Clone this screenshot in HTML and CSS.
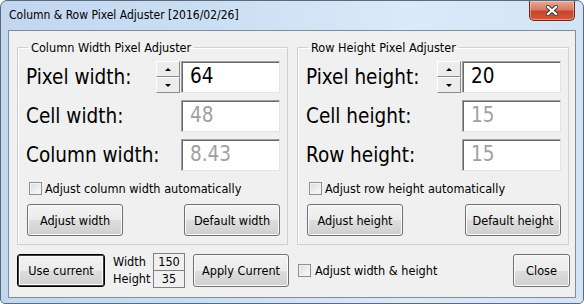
FILE: index.html
```html
<!DOCTYPE html>
<html lang="en">
<head>
    <meta charset="UTF-8">
    <title>Column &amp; Row Pixel Adjuster</title>
    <link rel="stylesheet" href="styles.css">
</head>
<body>

    <div class="window">
        <div class="titlebar">
            <span class="title">Column &amp; Row Pixel Adjuster [2016/02/26]</span>
            <button class="close-btn" title="Close">
                <svg width="12" height="11" viewBox="0 0 12 11">
                    <path d="M2 2 L10 9 M10 2 L2 9" stroke="#3a3a3a" stroke-width="4.2" stroke-linecap="square"/>
                    <path d="M2 2 L10 9 M10 2 L2 9" stroke="#fff" stroke-width="2.2" stroke-linecap="square"/>
                </svg>
            </button>
        </div>

        <div class="client">
            <div class="groups">
                <fieldset class="group">
                    <legend>Column Width Pixel Adjuster</legend>
                    <div class="field">
                        <span class="label">Pixel width:</span>
                        <div class="spin">
                            <span class="spin-btn"><i class="arrow-up"></i></span>
                            <span class="spin-btn"><i class="arrow-down"></i></span>
                        </div>
                        <div class="value">64</div>
                    </div>
                    <div class="field">
                        <span class="label">Cell width:</span>
                        <div class="value disabled">48</div>
                    </div>
                    <div class="field">
                        <span class="label">Column width:</span>
                        <div class="value disabled">8.43</div>
                    </div>
                    <label class="check"><span class="box"></span>Adjust column width automatically</label>
                    <div class="actions">
                        <button class="btn">Adjust width</button>
                        <button class="btn">Default width</button>
                    </div>
                </fieldset>

                <fieldset class="group wide">
                    <legend>Row Height Pixel Adjuster</legend>
                    <div class="field">
                        <span class="label">Pixel height:</span>
                        <div class="spin">
                            <span class="spin-btn"><i class="arrow-up"></i></span>
                            <span class="spin-btn"><i class="arrow-down"></i></span>
                        </div>
                        <div class="value">20</div>
                    </div>
                    <div class="field">
                        <span class="label">Cell height:</span>
                        <div class="value disabled">15</div>
                    </div>
                    <div class="field">
                        <span class="label">Row height:</span>
                        <div class="value disabled">15</div>
                    </div>
                    <label class="check"><span class="box"></span>Adjust row height automatically</label>
                    <div class="actions">
                        <button class="btn">Adjust height</button>
                        <button class="btn">Default height</button>
                    </div>
                </fieldset>
            </div>

            <div class="footer">
                <button class="btn btn-default">Use current</button>
                <div class="dims">
                    <div class="dim-labels">
                        <span>Width</span>
                        <span>Height</span>
                    </div>
                    <div class="dim-boxes">
                        <span>150</span>
                        <span>35</span>
                    </div>
                </div>
                <button class="btn btn-apply">Apply Current</button>
                <label class="check check-both"><span class="box"></span>Adjust width &amp; height</label>
                <button class="btn btn-close">Close</button>
            </div>
        </div>
    </div>

</body>
</html>
```

FILE: styles.css
```css
body {
    margin: 0;
    background-color: #ffffff;
    font-family: "DejaVu Sans Condensed", "DejaVu Sans", sans-serif;
    font-stretch: condensed;
    color: #000;
}

.window {
    box-sizing: border-box;
    width: 584px;
    height: 304px;
    border: 1px solid #5d6a7a;
    border-radius: 7px 7px 5px 5px;
    background: linear-gradient(to right, #c2d7ef 0%, #cadef3 35%, #dbe9f8 70%, #d3e4f6 100%);
    padding: 0 7px 5px;
    display: flex;
    flex-direction: column;
}

.titlebar {
    height: 29px;
    display: flex;
    align-items: flex-start;
}

.title {
    margin: 6px 0 0 1px;
    font-size: 12px;
    line-height: 16px;
}

.close-btn {
    margin-left: auto;
    margin-right: 1px;
    width: 46px;
    height: 20px;
    padding: 0;
    border: 1px solid #6e2a20;
    border-top: none;
    border-radius: 0 0 5px 5px;
    background: linear-gradient(#e9a796 0%, #db7b65 45%, #c9452c 55%, #d05a3e 100%);
    box-shadow: inset 0 0 0 1px rgba(255, 255, 255, 0.35);
    display: flex;
    align-items: center;
    justify-content: center;
}

.client {
    box-sizing: border-box;
    height: 268px;
    border: 1px solid #7f8c9b;
    background-color: #f0f0f0;
    padding: 9px 5px 0 8px;
}

.groups {
    display: flex;
    gap: 9px;
}

.group {
    box-sizing: border-box;
    width: 271px;
    margin: 0;
    border: 1px solid #d0d0d0;
    box-shadow: inset 1px 1px 0 #fff;
    padding: 6px 7px 8px 8px;
}

.group.wide {
    width: 272px;
}

.group legend {
    margin-left: 2px;
    padding: 0 3px;
    font-size: 12.6px;
    line-height: 15px;
}

.field {
    display: flex;
    align-items: center;
    height: 32px;
}

.field + .field {
    margin-top: 7px;
}

.label {
    flex: 1;
    font-size: 20.5px;
}

.spin {
    width: 24px;
    height: 32px;
    margin-right: 1px;
    display: flex;
    flex-direction: column;
}

.spin-btn {
    flex: 1;
    box-sizing: border-box;
    border: 1px solid;
    border-color: #fff #8a8a8a #8a8a8a #fff;
    background-color: #ececec;
    display: flex;
    align-items: center;
    justify-content: center;
}

.arrow-up,
.arrow-down {
    width: 0;
    height: 0;
    border-left: 3px solid transparent;
    border-right: 3px solid transparent;
}

.arrow-up {
    border-bottom: 3px solid #000;
}

.arrow-down {
    border-top: 3px solid #000;
}

.value {
    box-sizing: border-box;
    width: 99px;
    height: 32px;
    background-color: #fff;
    border: 1px solid;
    border-color: #a0a0a0 #e3e3e3 #e3e3e3 #a0a0a0;
    box-shadow: inset 1px 1px 0 #696969;
    padding-left: 8px;
    font-size: 20.5px;
    line-height: 29px;
}

.value.disabled {
    color: #a0a0a0;
}

.check {
    display: flex;
    align-items: center;
    height: 13px;
    margin: 11px 0 0 3px;
    font-size: 12.6px;
}

.box {
    box-sizing: border-box;
    width: 13px;
    height: 13px;
    margin-right: 3px;
    border: 1px solid #8e8f8f;
    background: linear-gradient(135deg, #dcdcdc, #fbfbfb);
    box-shadow: inset 0 0 0 1px #f4f4f4;
}

.actions {
    display: flex;
    justify-content: space-between;
    margin-top: 9px;
    padding-left: 1px;
}

.btn {
    width: 96px;
    height: 32px;
    padding: 0;
    border: 1px solid #707070;
    border-radius: 3px;
    background: linear-gradient(#f2f2f2 0%, #ebebeb 50%, #dddddd 51%, #cfcfcf 100%);
    box-shadow: inset 0 0 0 1px #fcfcfc;
    font-family: inherit;
    font-size: 12.6px;
    color: #000;
}

.footer {
    display: flex;
    align-items: center;
    height: 33px;
    margin-top: 9px;
}

.footer .btn {
    height: 33px;
}

.btn-default {
    width: 88px;
    border: 1px solid #000;
    box-shadow: inset 0 0 0 1px #3c3c3c, inset 0 0 0 2px #fcfcfc;
}

.dims {
    display: flex;
    margin-left: 8px;
}

.dim-labels {
    width: 40px;
    display: flex;
    flex-direction: column;
    font-size: 12.6px;
    line-height: 17px;
}

.dim-boxes {
    width: 32px;
    box-sizing: border-box;
    border: 1px solid #808080;
    display: flex;
    flex-direction: column;
    font-size: 12.6px;
    text-align: center;
}

.dim-boxes span {
    height: 16px;
    line-height: 16px;
}

.dim-boxes span + span {
    border-top: 1px solid #808080;
}

.btn-apply {
    margin-left: 8px;
}

.check-both {
    margin: 0 0 0 9px;
}

.check-both .box {
    margin-right: 4px;
}

.btn-close {
    width: 57px;
    margin-left: auto;
}
```
